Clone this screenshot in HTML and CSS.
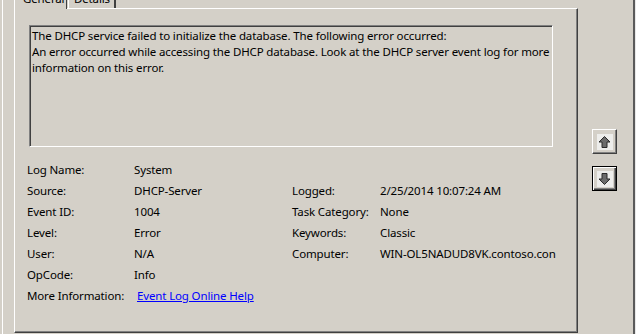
FILE: index.html
```html
<!DOCTYPE html>
<html lang="en">
<head>
    <meta charset="UTF-8">
    <title>Event Properties</title>
    <link rel="stylesheet" href="styles.css">
</head>
<body>
    <div class="screen">
        <div class="dialog">
            <div class="tabstrip">
                <div class="tab active">General</div>
                <div class="tab">Details</div>
            </div>
            <div class="panel-row">
                <div class="panel">
                    <div class="description">The DHCP service failed to initialize the database. The following error occurred:<br>An error occurred while accessing the DHCP database. Look at the DHCP server event log for more information on this error.</div>

                    <div class="props">
                        <div class="label">Log Name:</div><div class="value">System</div><div></div><div></div>
                        <div class="label">Source:</div><div class="value">DHCP-Server</div><div class="label">Logged:</div><div class="value">2/25/2014 10:07:24 AM</div>
                        <div class="label">Event ID:</div><div class="value">1004</div><div class="label">Task Category:</div><div class="value">None</div>
                        <div class="label">Level:</div><div class="value">Error</div><div class="label">Keywords:</div><div class="value">Classic</div>
                        <div class="label">User:</div><div class="value">N/A</div><div class="label">Computer:</div><div class="value">WIN-OL5NADUD8VK.contoso.con</div>
                        <div class="label">OpCode:</div><div class="value">Info</div><div></div><div></div>
                        <div class="label">More Information:</div><div class="value"><a class="help-link" href="#">Event Log Online Help</a></div><div></div><div></div>
                    </div>
                </div>

                <div class="nav">
                    <button class="nav-btn" title="Previous event">
                        <span class="nav-face">
                            <svg width="13" height="12" viewBox="0 0 13 12"><polygon points="6.5,0.5 12,6 9,6 9,11.5 4,11.5 4,6 1,6" fill="#6b6b6b" stroke="#2a2a2a" stroke-width="1"/></svg>
                        </span>
                    </button>
                    <button class="nav-btn default" title="Next event">
                        <span class="nav-face">
                            <svg width="13" height="12" viewBox="0 0 13 12"><polygon points="4,0.5 9,0.5 9,6 12,6 6.5,11.5 1,6 4,6" fill="#6b6b6b" stroke="#2a2a2a" stroke-width="1"/></svg>
                        </span>
                    </button>
                </div>
            </div>
        </div>
        <div class="edge"></div>
    </div>
</body>
</html>
```

FILE: styles.css
```css
:root {
    --face: #d4d0c8;
    --light: #ffffff;
    --shadow: #808080;
    --dark: #404040;
}

* {
    box-sizing: border-box;
}

body {
    margin: 0;
    background: var(--face);
    font-family: "Noto Sans", "Open Sans", sans-serif;
    font-size: 11.5px;
    letter-spacing: -0.14px;
    color: #000;
    overflow: hidden;
}

.screen {
    display: flex;
    width: 636px;
    height: 334px;
}

.dialog {
    flex: 1;
    margin-left: 2px;
    padding-left: 11px;
    border-left: 1px solid var(--light);
}

.tabstrip {
    display: flex;
    align-items: flex-end;
    height: 8px;
}

.tab {
    position: relative;
    display: flex;
    align-items: flex-end;
    flex-shrink: 0;
    height: 18px;
    padding: 0 0 2px 8px;
    line-height: 14px;
    border-left: 1px solid var(--light);
    border-right: 2px solid var(--dark);
    white-space: nowrap;
}

.tab.active {
    width: 53px;
    height: 22px;
    margin-bottom: -1px;
    padding-bottom: 3px;
    background: var(--face);
    border-right: 1px solid var(--dark);
    z-index: 1;
}

.tab:not(.active) {
    width: 48px;
    margin-left: 1px;
    padding-left: 5px;
}

.panel-row {
    display: flex;
}

.panel {
    width: 564px;
    height: 325px;
    border-top: 1px solid var(--light);
    border-left: 1px solid var(--light);
    border-right: 1px solid var(--dark);
    border-bottom: 1px solid var(--dark);
    box-shadow: inset -1px -1px var(--shadow);
}

.description {
    width: 524px;
    height: 122px;
    margin: 16px 0 0 14px;
    padding: 2px 0 0 2px;
    line-height: 16px;
    border: 1px solid;
    border-color: var(--shadow) var(--light) var(--light) var(--shadow);
    box-shadow: inset 1px 1px var(--dark), inset -1px -1px var(--face);
}

.props {
    display: grid;
    grid-template-columns: 107px 158px 88px auto;
    grid-auto-rows: 21px;
    align-items: center;
    margin: 12px 0 0 12px;
    white-space: nowrap;
}

.help-link {
    margin-left: 3px;
    color: #0000ff;
    text-decoration: underline;
}

.nav {
    display: flex;
    flex-direction: column;
    gap: 12px;
    margin: 121px 0 0 14px;
}

.nav-btn {
    display: flex;
    align-items: center;
    justify-content: center;
    width: 25px;
    height: 25px;
    padding: 0;
    background: var(--face);
    border: 1px solid;
    border-color: var(--light) var(--dark) var(--dark) var(--light);
    box-shadow: inset -1px -1px var(--shadow);
}

.nav-btn.default {
    border: 1px solid #000;
    box-shadow: inset 1px 1px var(--light), inset -1px -1px var(--dark), inset -2px -2px var(--shadow);
}

.nav-face {
    display: flex;
    align-items: center;
    justify-content: center;
    width: 16px;
    height: 16px;
    background: #ededeb;
}

.edge {
    width: 3px;
    border-left: 2px solid #5a5a5a;
    background: #e8e8e8;
}
```
